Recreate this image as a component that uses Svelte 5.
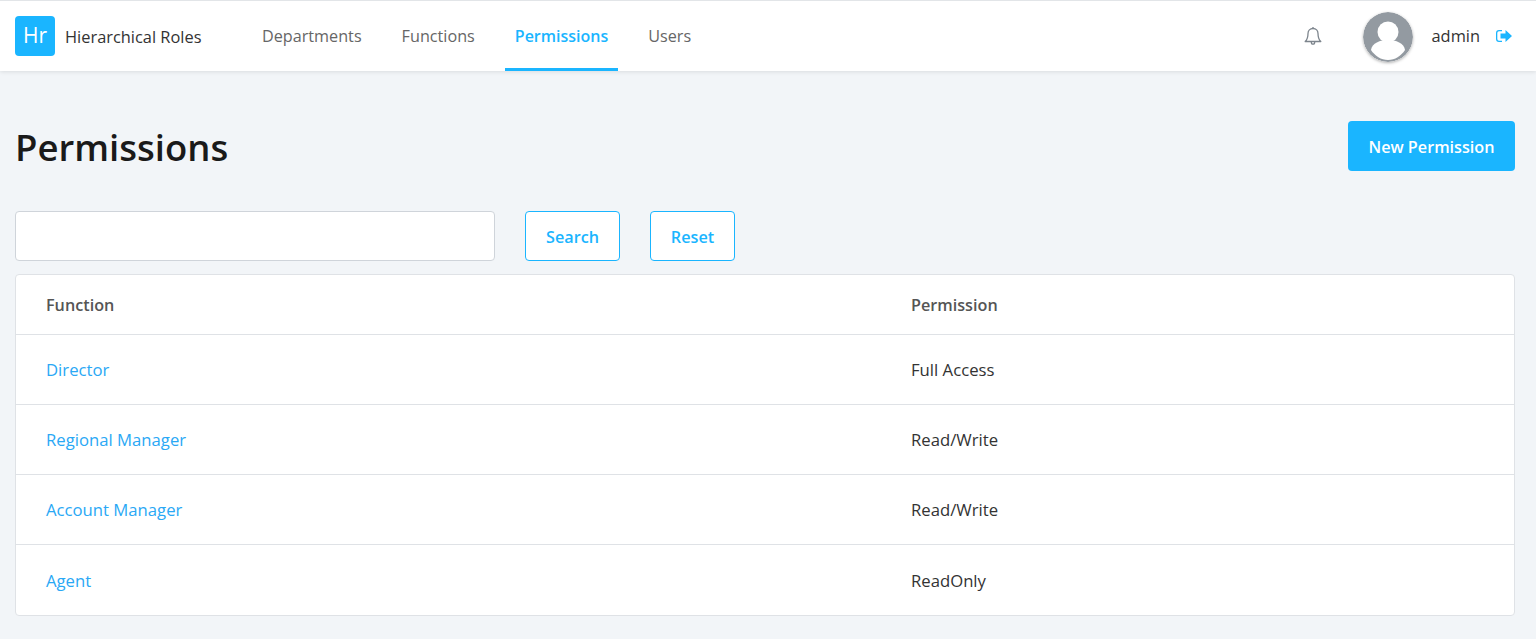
<script>
	const nav = ['Departments', 'Functions', 'Permissions', 'Users'];
	const rows = [
		{ fn: 'Director', perm: 'Full Access' },
		{ fn: 'Regional Manager', perm: 'Read/Write' },
		{ fn: 'Account Manager', perm: 'Read/Write' },
		{ fn: 'Agent', perm: 'ReadOnly' }
	];
</script>

<header class="topbar">
	<div class="brand">
		<span class="logo">Hr</span>
		<span class="brand-name">Hierarchical Roles</span>
	</div>
	<nav class="nav">
		{#each nav as item}
			<a href="#top" class="nav-item" class:active={item === 'Permissions'}>{item}</a>
		{/each}
	</nav>
	<div class="user">
		<svg class="bell" viewBox="0 0 20 20" width="20" height="20" fill="none" stroke="#7d858d" stroke-width="1.3" stroke-linejoin="round">
			<path d="M10 2.500c-3 0-5 2.200-5 5 0 4.500-1.200 6.500-2.800 8h15.600c-1.600-1.500-2.800-3.500-2.800-8 0-2.800-2-5-5-5z" />
			<path d="M8.300 16c0 1.300.7 2.200 1.700 2.200s1.700-.9 1.700-2.200" />
			<path d="M10 1v1.500" />
		</svg>
		<span class="avatar">
			<svg viewBox="0 0 50 50" width="50" height="50">
				<circle cx="25" cy="25" r="25" fill="#939aa1" />
				<circle cx="25" cy="20" r="10.500" fill="#fff" />
				<path d="M8 38c1-7 9-10 17-10s16 3 17 10c-4 6-10 10-17 10S12 44 8 38z" fill="#fff" />
			</svg>
		</span>
		<span class="user-name">admin</span>
		<svg class="logout" viewBox="0 0 16 14" width="16" height="14" fill="#1ab5ff">
			<path d="M6 1H3a3 3 0 0 0-3 3v6a3 3 0 0 0 3 3h3v-1.300H3A1.700 1.700 0 0 1 1.300 10V4A1.700 1.700 0 0 1 3 2.300h3z" />
			<path d="M9.500 1 16 7l-6.500 6V9.500H4.500v-5h5z" />
		</svg>
	</div>
</header>

<main class="page">
	<div class="title-row">
		<h1>Permissions</h1>
		<button class="btn primary">New Permission</button>
	</div>

	<div class="search-row">
		<input class="search" type="text" />
		<button class="btn outline search-btn">Search</button>
		<button class="btn outline reset-btn">Reset</button>
	</div>

	<table class="grid">
		<thead>
			<tr>
				<th class="col-fn">Function</th>
				<th>Permission</th>
			</tr>
		</thead>
		<tbody>
			{#each rows as row}
				<tr>
					<td class="col-fn"><a href="#top">{row.fn}</a></td>
					<td>{row.perm}</td>
				</tr>
			{/each}
		</tbody>
	</table>
</main>

<style>
	:global(body) {
		margin: 0;
		background: #f2f5f8;
		font-family: "Open Sans", sans-serif;
		color: #333;
	}
	.topbar {
		display: flex;
		align-items: center;
		height: 70px;
		border-top: 1px solid #e2e5e8;
		background: #fff;
		box-shadow: 0 1px 4px rgba(0, 0, 0, 0.1);
		padding: 0 24px 0 15px;
	}
	.brand {
		display: flex;
		align-items: center;
		gap: 10px;
		width: 237px;
	}
	.logo {
		width: 40px;
		height: 40px;
		border-radius: 4px;
		background: #1ab5ff;
		color: #fff;
		font-size: 21px;
		line-height: 38px;
		text-align: center;
	}
	.brand-name {
		font-size: 16.400px;
		color: #333;
	}
	.nav {
		display: flex;
		align-self: stretch;
	}
	.nav-item {
		display: flex;
		align-items: center;
		justify-content: center;
		padding: 2px 10px 0;
		margin-right: 20px;
		font-size: 16.200px;
		color: #666;
		text-decoration: none;
		border-bottom: 3px solid transparent;
		box-sizing: border-box;
		height: 70px;
	}
	.nav-item.active {
		color: #1ab5ff;
		font-size: 16px;
		font-weight: 600;
		border-bottom-color: #1ab5ff;
	}
	.user {
		margin-left: auto;
		display: flex;
		align-items: center;
	}
	.bell {
		margin-right: 40px;
	}
	.avatar {
		display: block;
		width: 50px;
		height: 50px;
		border-radius: 50%;
		margin: 2px 19px 0 0;
		box-shadow: 0 1px 3px rgba(0, 0, 0, 0.3);
		overflow: hidden;
	}
	.avatar svg {
		display: block;
	}
	.user-name {
		font-size: 16.400px;
		color: #333;
		margin: -1px 16px 0 0;
	}
	.page {
		padding: 0 21px 0 15px;
	}
	.title-row {
		display: flex;
		align-items: center;
		justify-content: space-between;
		padding-top: 50px;
		height: 50px;
	}
	h1 {
		margin: 0;
		font-size: 36.500px;
		font-weight: 600;
		color: #1a1a1a;
		padding-top: 2px;
	}
	.btn {
		font-family: inherit;
		font-size: 16.200px;
		font-weight: 600;
		border-radius: 4px;
		height: 50px;
		cursor: pointer;
		padding: 1px 0 0;
	}
	.primary {
		width: 167px;
		background: #1ab5ff;
		border: none;
		color: #fff;
	}
	.outline {
		background: #fff;
		border: 1px solid #1ab5ff;
		color: #1ab5ff;
	}
	.search-row {
		display: flex;
		margin-top: 40px;
		gap: 30px;
	}
	.search {
		width: 480px;
		height: 50px;
		box-sizing: border-box;
		background: #fff;
		border: 1px solid #cfd4da;
		border-radius: 4px;
	}
	.search-btn {
		width: 95px;
	}
	.reset-btn {
		width: 85px;
	}
	.grid {
		width: 100%;
		margin-top: 13px;
		border-collapse: separate;
		border-spacing: 0;
		background: #fff;
		border: 1px solid #dfe2e6;
		border-radius: 4px;
		font-size: 16.700px;
	}
	th, td {
		text-align: left;
		padding: 0 30px;
		border-bottom: 1px solid #dfe2e6;
	}
	tbody tr:last-child td {
		border-bottom: none;
		height: 70px;
	}
	th {
		height: 59px;
		font-size: 16.200px;
		font-weight: 600;
		color: #555;
	}
	td {
		height: 69px;
		color: #333;
	}
	.col-fn {
		width: 805px;
	}
	td a {
		color: #2aa8f5;
		text-decoration: none;
	}
</style>
